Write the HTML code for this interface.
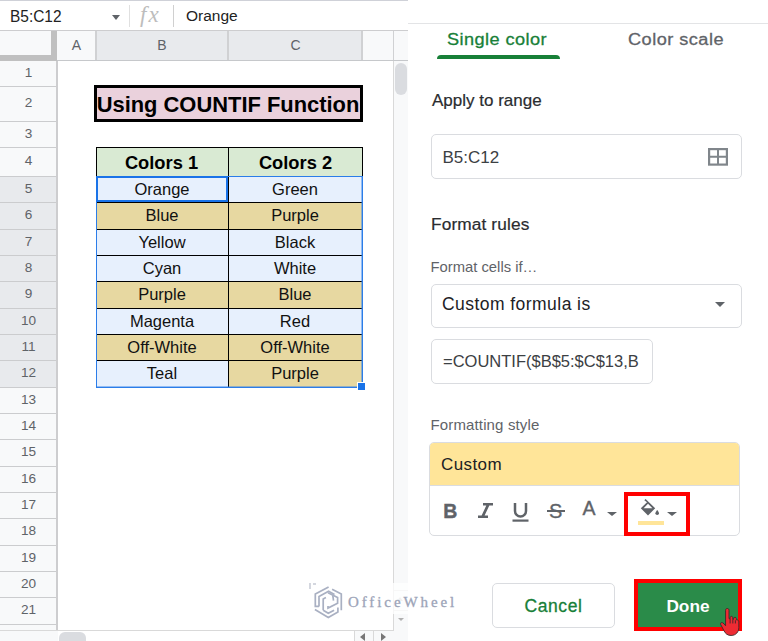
<!DOCTYPE html>
<html><head><meta charset="utf-8"><title>Sheet</title>
<style>
*{box-sizing:border-box;margin:0;padding:0}
html,body{width:768px;height:641px;overflow:hidden;background:#fff}
body{position:relative;font-family:"Liberation Sans",Arial,sans-serif;color:#000}
.abs{position:absolute}
.rh{position:absolute;left:0;width:57px;text-align:center;font-size:13.6px;color:#5f6368;background:#f8f9fa}
.rh.sel{background:#e8eaed}
.hl{position:absolute;background:#cbccce}
.cell{position:absolute;text-align:center;font-size:16.5px;color:#111;white-space:nowrap}
.pt{position:absolute;white-space:nowrap;color:#202124}
.k{position:absolute;background:#000}
.bl{position:absolute;background:#1a73e8}
</style></head><body>

<div class="abs" style="left:0;top:0;width:408px;height:1px;background:#cfd1d8"></div>
<div class="pt" style="left:10px;top:7px;font-size:16.2px;transform:scaleX(0.955);transform-origin:0 0;line-height:18px;color:#222">B5:C12</div>
<div class="abs" style="left:112px;top:15px;width:0;height:0;border-left:4.5px solid transparent;border-right:4.5px solid transparent;border-top:5px solid #5f6368"></div>
<div class="abs" style="left:129px;top:5px;width:1px;height:22px;background:#e0e0e0"></div>
<div class="pt" style="left:140px;top:3px;font-family:'Liberation Serif',serif;font-style:italic;font-size:23px;line-height:24px;letter-spacing:2px;color:#bdbdbd">fx</div>
<div class="abs" style="left:173px;top:5px;width:1px;height:22px;background:#d0d0d0"></div>
<div class="pt" style="left:186px;top:7px;font-size:15.5px;line-height:18px;color:#222">Orange</div>
<div class="abs" style="left:0;top:30px;width:408px;height:1px;background:#cdcdcf"></div>
<div class="abs" style="left:0;top:31px;width:408px;height:29px;background:#f8f9fa"></div>
<div class="abs" style="left:96px;top:31px;width:266px;height:29px;background:#e8eaed"></div>
<div class="abs" style="left:51px;top:31px;width:6px;height:30px;background:#c0c0c0"></div>
<div class="abs" style="left:0;top:55px;width:57px;height:6px;background:#c0c0c0"></div>
<div class="abs" style="left:95px;top:31px;width:2px;height:29px;background:#d0d1d3"></div>
<div class="abs" style="left:227px;top:31px;width:2px;height:29px;background:#d0d1d3"></div>
<div class="abs" style="left:361px;top:31px;width:2px;height:29px;background:#d0d1d3"></div>
<div class="abs" style="left:393px;top:31px;width:1px;height:29px;background:#d0d1d3"></div>
<div class="abs" style="left:57px;top:60px;width:351px;height:1px;background:#c6c8cb"></div>
<div class="pt" style="left:58px;top:37px;width:37px;text-align:center;font-size:14px;line-height:16px;color:#5f6368">A</div>
<div class="pt" style="left:96px;top:37px;width:132px;text-align:center;font-size:14px;line-height:16px;color:#5f6368">B</div>
<div class="pt" style="left:229px;top:37px;width:133px;text-align:center;font-size:14px;line-height:16px;color:#5f6368">C</div>
<div class="rh" style="top:61px;height:25px;line-height:23px">1</div>
<div class="hl" style="left:0;top:86px;width:57px;height:1px"></div>
<div class="rh" style="top:87px;height:34px;line-height:32px">2</div>
<div class="hl" style="left:0;top:121px;width:57px;height:1px"></div>
<div class="rh" style="top:122px;height:25px;line-height:23px">3</div>
<div class="hl" style="left:0;top:147px;width:57px;height:1px"></div>
<div class="rh" style="top:148px;height:28px;line-height:26px">4</div>
<div class="hl" style="left:0;top:176px;width:57px;height:1px"></div>
<div class="rh sel" style="top:177px;height:25px;line-height:23px">5</div>
<div class="hl" style="left:0;top:202px;width:57px;height:1px"></div>
<div class="rh sel" style="top:203px;height:26px;line-height:24px">6</div>
<div class="hl" style="left:0;top:229px;width:57px;height:1px"></div>
<div class="rh sel" style="top:230px;height:25px;line-height:23px">7</div>
<div class="hl" style="left:0;top:255px;width:57px;height:1px"></div>
<div class="rh sel" style="top:256px;height:25px;line-height:23px">8</div>
<div class="hl" style="left:0;top:281px;width:57px;height:1px"></div>
<div class="rh sel" style="top:282px;height:26px;line-height:24px">9</div>
<div class="hl" style="left:0;top:308px;width:57px;height:1px"></div>
<div class="rh sel" style="top:309px;height:25px;line-height:23px">10</div>
<div class="hl" style="left:0;top:334px;width:57px;height:1px"></div>
<div class="rh sel" style="top:335px;height:25px;line-height:23px">11</div>
<div class="hl" style="left:0;top:360px;width:57px;height:1px"></div>
<div class="rh sel" style="top:361px;height:26px;line-height:24px">12</div>
<div class="hl" style="left:0;top:387px;width:57px;height:1px"></div>
<div class="rh" style="top:388px;height:25px;line-height:23px">13</div>
<div class="hl" style="left:0;top:413px;width:57px;height:1px"></div>
<div class="rh" style="top:414px;height:25px;line-height:23px">14</div>
<div class="hl" style="left:0;top:439px;width:57px;height:1px"></div>
<div class="rh" style="top:440px;height:26px;line-height:24px">15</div>
<div class="hl" style="left:0;top:466px;width:57px;height:1px"></div>
<div class="rh" style="top:467px;height:25px;line-height:23px">16</div>
<div class="hl" style="left:0;top:492px;width:57px;height:1px"></div>
<div class="rh" style="top:493px;height:25px;line-height:23px">17</div>
<div class="hl" style="left:0;top:518px;width:57px;height:1px"></div>
<div class="rh" style="top:519px;height:26px;line-height:24px">18</div>
<div class="hl" style="left:0;top:545px;width:57px;height:1px"></div>
<div class="rh" style="top:546px;height:25px;line-height:23px">19</div>
<div class="hl" style="left:0;top:571px;width:57px;height:1px"></div>
<div class="rh" style="top:572px;height:25px;line-height:23px">20</div>
<div class="hl" style="left:0;top:597px;width:57px;height:1px"></div>
<div class="rh" style="top:598px;height:26px;line-height:24px">21</div>
<div class="hl" style="left:0;top:624px;width:57px;height:2px"></div>
<div class="rh" style="top:625px;height:5px;line-height:3px"></div>
<div class="abs" style="left:56px;top:61px;width:2px;height:569px;background:#cdcdcf"></div>
<div class="abs" style="left:393px;top:61px;width:1px;height:569px;background:#d9d9d9"></div>
<div class="abs" style="left:394px;top:61px;width:14px;height:580px;background:#f8f9fa"></div>
<div class="abs" style="left:395px;top:63px;width:12px;height:32px;border-radius:6px;background:#dadce0"></div>
<div class="abs" style="left:394px;top:590px;width:14px;height:1px;background:#e0e0e0"></div>
<div class="abs" style="left:394px;top:610px;width:14px;height:1px;background:#e0e0e0"></div>
<div class="abs" style="left:397px;top:597px;width:0;height:0;border-left:3.5px solid transparent;border-right:3.5px solid transparent;border-bottom:4px solid #c4c4c4"></div>
<div class="abs" style="left:397.5px;top:618px;width:0;height:0;border-left:3.2px solid transparent;border-right:3.2px solid transparent;border-top:3.8px solid #b0b0b0"></div>
<div class="abs" style="left:0;top:630px;width:408px;height:11px;background:#f8f9fa"></div>
<div class="abs" style="left:58px;top:630px;width:336px;height:11px;background:#fff"></div>
<div class="abs" style="left:0;top:630px;width:394px;height:1px;background:#d9d9d9"></div>
<div class="abs" style="left:59px;top:632px;width:27px;height:14px;border-radius:6px;background:#dadce0"></div>
<div class="abs" style="left:354px;top:631px;width:40px;height:10px;background:#f8f9fa"></div>
<div class="abs" style="left:354px;top:631px;width:1px;height:10px;background:#d9d9d9"></div>
<div class="abs" style="left:373px;top:631px;width:1px;height:10px;background:#d9d9d9"></div>
<div class="abs" style="left:360px;top:633px;width:0;height:0;border-top:4px solid transparent;border-bottom:4px solid transparent;border-right:5px solid #777"></div>
<div class="abs" style="left:381px;top:633px;width:0;height:0;border-top:4px solid transparent;border-bottom:4px solid transparent;border-left:5px solid #777"></div>
<div class="abs" style="left:94px;top:85px;width:269px;height:37px;background:#ead1dc;border:3px solid #000"></div>
<div class="pt" style="left:96px;top:88px;width:264px;height:33px;line-height:33px;text-align:center;font-weight:bold;font-size:21.9px;color:#000">Using COUNTIF Function</div>
<div class="abs" style="left:96px;top:148px;width:267px;height:29px;background:#d9ead3"></div>
<div class="cell" style="left:96px;top:148px;width:131px;height:29px;line-height:29px;font-weight:bold;font-size:18.3px;color:#000">Colors 1</div>
<div class="cell" style="left:229px;top:148px;width:133px;height:29px;line-height:29px;font-weight:bold;font-size:18.3px;color:#000">Colors 2</div>
<div class="cell" style="left:97px;top:177px;width:131px;height:25px;line-height:24px;background:#e7f0fd"><span style="position:relative;left:-0.5px">Orange</span></div>
<div class="cell" style="left:229px;top:177px;width:133px;height:25px;line-height:24px;background:#e7f0fd"><span style="position:relative;left:-0.5px">Green</span></div>
<div class="k" style="left:97px;top:202px;width:265px;height:1px"></div>
<div class="cell" style="left:97px;top:203px;width:131px;height:26px;line-height:25px;background:#e7d8a1"><span style="position:relative;left:-0.5px">Blue</span></div>
<div class="cell" style="left:229px;top:203px;width:133px;height:26px;line-height:25px;background:#e7d8a1"><span style="position:relative;left:-0.5px">Purple</span></div>
<div class="k" style="left:97px;top:229px;width:265px;height:1px"></div>
<div class="cell" style="left:97px;top:230px;width:131px;height:25px;line-height:24px;background:#e7f0fd"><span style="position:relative;left:-0.5px">Yellow</span></div>
<div class="cell" style="left:229px;top:230px;width:133px;height:25px;line-height:24px;background:#e7f0fd"><span style="position:relative;left:-0.5px">Black</span></div>
<div class="k" style="left:97px;top:255px;width:265px;height:1px"></div>
<div class="cell" style="left:97px;top:256px;width:131px;height:25px;line-height:24px;background:#e7f0fd"><span style="position:relative;left:-0.5px">Cyan</span></div>
<div class="cell" style="left:229px;top:256px;width:133px;height:25px;line-height:24px;background:#e7f0fd"><span style="position:relative;left:-0.5px">White</span></div>
<div class="k" style="left:97px;top:281px;width:265px;height:1px"></div>
<div class="cell" style="left:97px;top:282px;width:131px;height:26px;line-height:25px;background:#e7d8a1"><span style="position:relative;left:-0.5px">Purple</span></div>
<div class="cell" style="left:229px;top:282px;width:133px;height:26px;line-height:25px;background:#e7d8a1"><span style="position:relative;left:-0.5px">Blue</span></div>
<div class="k" style="left:97px;top:308px;width:265px;height:1px"></div>
<div class="cell" style="left:97px;top:309px;width:131px;height:25px;line-height:24px;background:#e7f0fd"><span style="position:relative;left:-0.5px">Magenta</span></div>
<div class="cell" style="left:229px;top:309px;width:133px;height:25px;line-height:24px;background:#e7f0fd"><span style="position:relative;left:-0.5px">Red</span></div>
<div class="k" style="left:97px;top:334px;width:265px;height:1px"></div>
<div class="cell" style="left:97px;top:335px;width:131px;height:25px;line-height:24px;background:#e7d8a1"><span style="position:relative;left:-0.5px">Off-White</span></div>
<div class="cell" style="left:229px;top:335px;width:133px;height:25px;line-height:24px;background:#e7d8a1"><span style="position:relative;left:-0.5px">Off-White</span></div>
<div class="k" style="left:97px;top:360px;width:265px;height:1px"></div>
<div class="cell" style="left:97px;top:361px;width:131px;height:26px;line-height:25px;background:#e7f0fd"><span style="position:relative;left:-0.5px">Teal</span></div>
<div class="cell" style="left:229px;top:361px;width:133px;height:26px;line-height:25px;background:#e7d8a1"><span style="position:relative;left:-0.5px">Purple</span></div>
<div class="k" style="left:96px;top:147px;width:267px;height:1px"></div>
<div class="k" style="left:96px;top:147px;width:1px;height:29px"></div>
<div class="k" style="left:362px;top:147px;width:1px;height:29px"></div>
<div class="k" style="left:228px;top:147px;width:1px;height:240px"></div>
<div class="abs" style="left:96px;top:176px;width:267px;height:212px;border:1px solid #2b7de9"></div>
<div class="abs" style="left:361px;top:177px;width:1px;height:210px;background:rgba(43,125,233,0.45)"></div>
<div class="abs" style="left:97px;top:386px;width:265px;height:1px;background:rgba(43,125,233,0.45)"></div>
<div class="abs" style="left:96px;top:176.3px;width:132.3px;height:25.4px;border:2.5px solid #1a73e8"></div>
<div class="abs" style="left:357px;top:382px;width:9px;height:9px;background:#1a73e8;border:1px solid #fff"></div><div class="abs" style="left:408px;top:0;width:360px;height:641px;background:#fff"></div>
<div class="abs" style="left:408px;top:23px;width:360px;height:1px;background:#e3e4e6"></div>
<div class="pt" id="t_single" style="left:447px;top:29px;font-size:17.3px;letter-spacing:0.4px;transform:scaleX(1.05);transform-origin:0 0;line-height:20px;color:#188038;-webkit-text-stroke:0.3px #188038">Single color</div>
<div class="abs" style="left:437px;top:55px;width:123px;height:4px;background:#188038;border-radius:4px 4px 0 0"></div>
<div class="pt" id="t_scale" style="left:628px;top:29px;font-size:17.3px;letter-spacing:0.45px;transform:scaleX(1.05);transform-origin:0 0;line-height:20px;color:#5f6368;-webkit-text-stroke:0.3px #5f6368">Color scale</div>
<div class="pt" id="t_apply" style="left:432px;top:91px;font-size:17px;line-height:20px;color:#2a2c2f;-webkit-text-stroke:0.2px #2a2c2f">Apply to range</div>
<div class="abs" style="left:431px;top:134px;width:311px;height:45px;border:1px solid #dadce0;border-radius:5px"></div>
<div class="pt" id="t_range" style="left:442.5px;top:147.5px;font-size:17px;line-height:20px;color:#3c4043">B5:C12</div>
<svg class="abs" style="left:708px;top:148px" width="20" height="18" viewBox="0 0 20 18"><rect x="1.1" y="1.1" width="17.8" height="15.5" fill="none" stroke="#80868b" stroke-width="2.2"/><path d="M10 1V17M1 8.800H19" stroke="#80868b" stroke-width="2" fill="none"/></svg>
<div class="pt" id="t_rules" style="left:431px;top:214px;font-size:17.3px;letter-spacing:0.12px;line-height:20px;color:#2a2c2f;-webkit-text-stroke:0.2px #2a2c2f">Format rules</div>
<div class="pt" id="t_if" style="left:430.5px;top:258px;font-size:14.8px;line-height:18px;color:#5f6368">Format cells if…</div>
<div class="abs" style="left:431px;top:284px;width:311px;height:44px;border:1px solid #dadce0;border-radius:5px"></div>
<div class="pt" id="t_custom" style="left:442px;top:294px;font-size:17.5px;letter-spacing:0.45px;line-height:20px;color:#202124">Custom formula is</div>
<div class="abs" style="left:715px;top:302px;width:0;height:0;border-left:5px solid transparent;border-right:5px solid transparent;border-top:5.5px solid #5f6368"></div>
<div class="abs" style="left:431px;top:339px;width:222px;height:45px;border:1px solid #dadce0;border-radius:5px"></div>
<div class="pt" id="t_formula" style="left:443px;top:351px;font-size:16.5px;line-height:20px;color:#3c4043">=COUNTIF($B$5:$C$13,B</div>
<div class="pt" id="t_fstyle" style="left:430.5px;top:416px;font-size:15px;letter-spacing:0.14px;line-height:18px;color:#5f6368">Formatting style</div>
<div class="abs" style="left:429px;top:442px;width:311px;height:94px;border:1px solid #dadce0;border-radius:5px;overflow:hidden"><div style="height:42px;background:#ffe599"></div><div style="height:1px;background:#dadce0"></div></div>
<div class="pt" id="t_cust2" style="left:441px;top:455px;font-size:17px;letter-spacing:0.4px;line-height:20px;color:#202124">Custom</div>
<div class="pt" id="i_b" style="left:443.3px;top:499.5px;font-size:19.5px;line-height:22px;font-weight:bold;color:#5f6368;-webkit-text-stroke:0.4px #5f6368">B</div>
<svg class="abs" style="left:477px;top:503px" width="17" height="15" viewBox="0 0 17 15"><path d="M6 0H16V2.6H12.3L7.6 12.4H11V15H1V12.4H4.6L9.3 2.6H6Z" fill="#5f6368"/></svg>
<svg class="abs" style="left:512px;top:503px" width="17" height="19" viewBox="0 0 17 19"><path d="M3 0V8a5.5 5.5 0 0 0 11 0V0" fill="none" stroke="#5f6368" stroke-width="2.5"/><rect x="0.5" y="16.5" width="16" height="2.2" fill="#5f6368"/></svg>
<div class="pt" id="i_s" style="left:549px;top:499.5px;font-size:20px;line-height:22px;color:#5f6368;-webkit-text-stroke:0.3px #5f6368">S</div>
<div class="abs" style="left:547px;top:510px;width:18px;height:2px;background:#5f6368"></div>
<div class="pt" id="i_a" style="left:582.5px;top:496px;font-size:19.5px;line-height:24px;color:#5f6368;-webkit-text-stroke:0.35px #5f6368">A</div>
<div class="abs" style="left:606.5px;top:512px;width:0;height:0;border-left:5px solid transparent;border-right:5px solid transparent;border-top:4.5px solid #5f6368"></div>
<div class="abs" style="left:624px;top:491.6px;width:66.3px;height:44px;border:4px solid #ff0000"></div>
<svg class="abs" style="left:640px;top:498px" width="20" height="19" viewBox="0 0 20 19"><path d="M4.3 2.2L5.6 0.9L15.2 10.3L8 17.5L0.8 10.3L7 4.2Z M3.6 10.2H12.4L8 5.8Z" fill="#5f6368" fill-rule="evenodd"/><path d="M17.2 12c0 0 -1.8 2 -1.8 3.2a1.8 1.8 0 0 0 3.6 0C19 14 17.2 12 17.2 12Z" fill="#5f6368"/></svg>
<div class="abs" style="left:637.5px;top:520.7px;width:26px;height:4.7px;background:#ffe599"></div>
<div class="abs" style="left:666.5px;top:512px;width:0;height:0;border-left:5px solid transparent;border-right:5px solid transparent;border-top:4.8px solid #5f6368"></div>
<div class="abs" id="b_cancel" style="left:492px;top:583px;width:123px;height:45px;border:1px solid #dadce0;border-radius:5px;text-align:center;line-height:45px;font-size:17.5px;letter-spacing:0.6px;color:#188038;-webkit-text-stroke:0.3px #188038">Cancel</div>
<div class="abs" id="b_done" style="left:634px;top:579px;width:108px;height:51.8px;border:4px solid #ff0000;background:#2a8b49;text-align:center;line-height:47.500px;font-size:17.3px;font-weight:bold;color:#fff">Done</div>
<svg class="abs" style="left:719px;top:608px" width="21.84" height="29.12" viewBox="0 0 24 32"><path d="M7.2 2.5c0-1.3 0.9-2 1.9-2s1.9 0.7 1.9 2v9.2l1.2 0.2v-1.3c0-0.9 0.7-1.4 1.5-1.4s1.5 0.5 1.5 1.4v1.8l1-0.1v-0.8c0-0.9 0.6-1.3 1.4-1.3s1.4 0.5 1.4 1.3v1.5h0.6c1.4 0 2.2 0.9 2.2 2.3v6.2c0 4.5-3 8.700-8.500 8.700c-4 0-6.200-2-7.800-5.200l-3.600-6.800c-0.700-1.300 0.500-2.700 2-2c1.200 0.600 2.200 1.800 3.300 3.300z" fill="#ee2b33" stroke="#3a2a2a" stroke-width="1"/><path d="M12.200 12v5M15.200 12.500v4.500M18 13.500v3.500" stroke="#3a2a2a" stroke-width="1" fill="none"/></svg>
<div class="abs" style="left:308px;top:583px;width:152px;height:31px;background:rgba(255,255,255,0.75)"></div>
<div class="abs" style="left:309px;top:583px;width:2px;height:6px;background:#d4d7df"></div>
<div class="abs" style="left:313px;top:583px;width:3px;height:2px;background:#d4d7df"></div>
<svg class="abs" style="left:306px;top:580px" width="44" height="44" viewBox="0 0 44 44" fill="none" stroke="#a9b0c2" stroke-width="1.7" stroke-linejoin="miter"><path d="M13 26.400H9.300V14.100L22.600 6.900"/><path d="M13 26.400V16.500L22.600 11.300L28.500 14.400"/><path d="M17.200 30.200V18.900L19.900 17.500"/><path d="M26.100 9.300L35.300 14.100V30.200"/><path d="M22 12.700L31.600 17.500V23.300L22 28.100V26"/><path d="M26.800 15.400L27.500 20.600"/><path d="M8.900 29.500L22.300 37.400L31.900 31.900V27.500"/><path d="M17.200 30.200L22.300 33.300L28.100 30.200"/></svg>
<div class="pt" id="t_wm" style="left:348px;top:592px;font-family:'Liberation Serif',serif;font-size:15px;line-height:20px;letter-spacing:2.9px;color:#9ca4b8;-webkit-text-stroke:0.3px #9ca4b8">OfficeWheel</div>
</body></html>
